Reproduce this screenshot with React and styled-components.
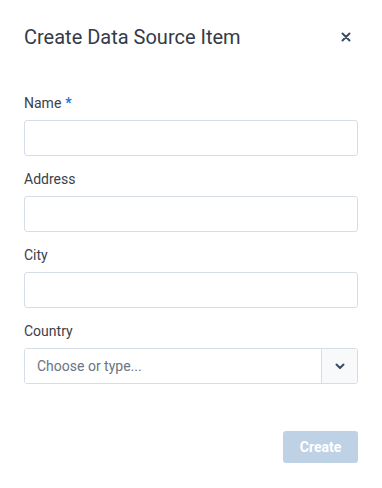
import React, { useState } from "react";
import styled, { createGlobalStyle } from "styled-components";

const GlobalStyle = createGlobalStyle`
  body {
    margin: 0;
    background: #ffffff;
    font-family: Roboto, "Liberation Sans", sans-serif;
  }
`;

const Dialog = styled.div`
  width: 382px;
  height: 488px;
  box-sizing: border-box;
  padding: 24px 24px 0 24px;
  display: flex;
  flex-direction: column;
`;

const Header = styled.div`
  display: flex;
  align-items: center;
  justify-content: space-between;
  height: 26px;
  margin-bottom: 43px;
`;

const Title = styled.h2`
  margin: 0;
  font-size: 20px;
  font-weight: 400;
  line-height: 26px;
  color: #343b46;
`;

const CloseButton = styled.button`
  border: none;
  background: none;
  padding: 0;
  margin-right: 4px;
  width: 16px;
  height: 16px;
  display: flex;
  align-items: center;
  justify-content: center;
  cursor: pointer;
`;

const Form = styled.form`
  display: flex;
  flex-direction: column;
  gap: 13px;
`;

const Field = styled.div`
  display: flex;
  flex-direction: column;
`;

const Label = styled.label`
  font-size: 14px;
  line-height: 20px;
  color: #3a414c;
  margin-bottom: 7px;
`;

const Required = styled.span`
  color: #1473e6;
  font-weight: 700;
  margin-left: 4px;
`;

const Input = styled.input`
  box-sizing: border-box;
  height: 36px;
  width: 100%;
  border: 1px solid #d7dde6;
  border-radius: 3px;
  padding: 0 12px;
  font-family: inherit;
  font-size: 14px;
  color: #323a45;
  outline: none;
`;

const Combo = styled.div`
  display: flex;
  height: 36px;
  box-sizing: border-box;
  border: 1px solid #d7dde6;
  border-radius: 3px;
  overflow: hidden;
`;

const ComboInput = styled.input`
  flex: 1;
  border: none;
  padding: 0 12px;
  font-family: inherit;
  font-size: 14px;
  color: #323a45;
  outline: none;
  &::placeholder {
    color: #6b7482;
  }
`;

const ComboToggle = styled.button`
  width: 36px;
  border: none;
  border-left: 1px solid #d7dde6;
  background: #f7f9fb;
  display: flex;
  align-items: center;
  justify-content: center;
  padding: 0;
  cursor: pointer;
`;

const Footer = styled.div`
  display: flex;
  justify-content: flex-end;
  margin-top: 47px;
`;

const CreateButton = styled.button`
  width: 75px;
  height: 32px;
  border: none;
  border-radius: 3px;
  background: #bfd1e5;
  color: #ffffff;
  font-family: inherit;
  font-size: 14px;
  font-weight: 700;
  cursor: default;
`;

const App = () => {
    const [item, setItem] = useState({ name: "", address: "", city: "", country: "" });

    function handleChange(event) {
        setItem({ ...item, [event.target.name]: event.target.value });
    }

    return (
        <Dialog>
            <GlobalStyle />
            <Header>
                <Title>Create Data Source Item</Title>
                <CloseButton aria-label="Close">
                    <svg width="10" height="10" viewBox="0 0 10 10">
                        <path d="M1.5 1.5 L8.5 8.5 M8.5 1.5 L1.5 8.5" stroke="#3c4c63" strokeWidth="2" strokeLinecap="round" />
                    </svg>
                </CloseButton>
            </Header>
            <Form onSubmit={e => e.preventDefault()}>
                <Field>
                    <Label>Name<Required>*</Required></Label>
                    <Input name="name" value={item.name} onChange={handleChange} />
                </Field>
                <Field>
                    <Label>Address</Label>
                    <Input name="address" value={item.address} onChange={handleChange} />
                </Field>
                <Field>
                    <Label>City</Label>
                    <Input name="city" value={item.city} onChange={handleChange} />
                </Field>
                <Field>
                    <Label>Country</Label>
                    <Combo>
                        <ComboInput
                            name="country"
                            placeholder="Choose or type..."
                            value={item.country}
                            onChange={handleChange}
                        />
                        <ComboToggle type="button" aria-label="Open">
                            <svg width="10" height="7" viewBox="0 0 10 7">
                                <path d="M1.5 1.5 L5 5 L8.5 1.5" fill="none" stroke="#3c4c63" strokeWidth="2" strokeLinecap="round" strokeLinejoin="round" />
                            </svg>
                        </ComboToggle>
                    </Combo>
                </Field>
            </Form>
            <Footer>
                <CreateButton disabled>Create</CreateButton>
            </Footer>
        </Dialog>
    );
};

export default App;
